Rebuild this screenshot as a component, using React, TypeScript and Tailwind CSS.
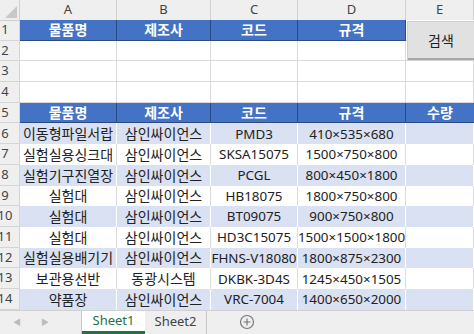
const cols = "grid grid-cols-[20px_97px_94px_87px_108px_68px]";
const font = { fontFamily: '"Noto Sans", "Noto Sans CJK KR", sans-serif' };

const rows = [
  ["이동형파일서랍", "삼인싸이언스", "PMD3", "410×535×680"],
  ["실험실용싱크대", "삼인싸이언스", "SKSA15075", "1500×750×800"],
  ["실험기구진열장", "삼인싸이언스", "PCGL", "800×450×1800"],
  ["실험대", "삼인싸이언스", "HB18075", "1800×750×800"],
  ["실험대", "삼인싸이언스", "BT09075", "900×750×800"],
  ["실험대", "삼인싸이언스", "HD3C15075", "1500×1500×1800"],
  ["실험실용배기기", "삼인싸이언스", "FHNS-V18080", "1800×875×2300"],
  ["보관용선반", "동광시스템", "DKBK-3D4S", "1245×450×1505"],
  ["약품장", "삼인싸이언스", "VRC-7004", "1400×650×2000"],
];

function RowNum({ n }: { n: number }) {
  return (
    <div className="h-full overflow-hidden border-r border-b border-[#d4d4d4] bg-[#efefef] flex items-center">
      <div className="ml-[-11px] w-[32px] shrink-0 text-center text-[13px] text-[#444]">{n}</div>
    </div>
  );
}

function Cell({ children, className = "" }: { children?: React.ReactNode; className?: string }) {
  return (
    <div className={`h-full overflow-hidden flex items-center justify-center whitespace-nowrap ${className}`}>
      {children}
    </div>
  );
}

function HeadRow({ n, withE }: { n: number; withE: boolean }) {
  const labels = ["물품명", "제조사", "코드", "규격"];
  return (
    <div className={`${cols} h-[20.7px]`}>
      <RowNum n={n} />
      {labels.map((l) => (
        <Cell key={l} className="bg-[#4472c4] border-r border-b border-[#2a4a86] text-white font-bold text-[14px]">
          {l}
        </Cell>
      ))}
      {withE ? (
        <Cell className="bg-[#4472c4] border-b border-[#2a4a86] text-white font-bold text-[14px]">수량</Cell>
      ) : (
        <Cell className="bg-white border-b border-[#d9d9d9]" />
      )}
    </div>
  );
}

function EmptyRow({ n }: { n: number }) {
  return (
    <div className={`${cols} h-[20.7px]`}>
      <RowNum n={n} />
      {[0, 1, 2, 3, 4].map((i) => (
        <Cell key={i} className="bg-white border-r border-b border-[#dadada]" />
      ))}
    </div>
  );
}

export default function App() {
  return (
    <div className="relative w-[474px] h-[334px] overflow-hidden bg-white text-[#222]" style={font}>
      <div className={`${cols} h-[20px]`}>
        <div className="relative border-r border-b border-[#d0d0d0] bg-[#efefef]">
          <svg className="absolute right-[2px] bottom-[2px]" width="12" height="12" viewBox="0 0 12 12">
            <polygon points="12,0 12,12 0,12" fill="#c8c8c8" />
          </svg>
        </div>
        {["A", "B", "C", "D", "E"].map((c) => (
          <div key={c} className="flex items-center justify-center border-r border-b border-[#d0d0d0] bg-[#efefef] text-[13px] text-[#444]">
            {c}
          </div>
        ))}
      </div>
      <HeadRow n={1} withE={false} />
      <EmptyRow n={2} />
      <EmptyRow n={3} />
      <EmptyRow n={4} />
      <HeadRow n={5} withE={true} />
      {rows.map((r, i) => {
        const blue = i % 2 === 0;
        const bg = blue ? "bg-[#d9e1f2] border-white" : "bg-white border-[#dcdcdc]";
        return (
          <div key={i} className={`${cols} h-[20.7px]`}>
            <RowNum n={i + 6} />
            {r.map((t, j) => (
              <Cell key={j} className={`${bg} border-r ${j < 2 ? "text-[14px]" : "text-[13.4px]"}`}>{t}</Cell>
            ))}
            <Cell className={`${bg} border-r`} />
          </div>
        );
      })}

      <button className="absolute left-[408px] top-[22px] w-[68px] h-[38px] bg-[#e1e1e1] border-r-2 border-b-2 border-[#a8a8a8] shadow-[0_0_0_1px_#d0d0d0] text-[14px] text-[#222]">
        검색
      </button>

      <div className="flex h-[24px] border-t border-[#d0d0d0] bg-[#efefef] text-[13px]">
        <div className="w-[82px] flex items-center border-r border-[#c8c8c8] text-[#bbb] text-[8px]">
          <span className="ml-[13px]">◀</span>
          <span className="ml-[20px]">▶</span>
        </div>
        <div className="w-[63px] flex items-center justify-center bg-white border-b-[3px] border-[#217346] text-[#217346]">
          Sheet1
        </div>
        <div className="w-[62px] flex items-center justify-center border-r border-[#c8c8c8] text-[#444]">
          Sheet2
        </div>
        <div className="w-[80px] flex items-center justify-center">
          <svg width="16" height="16" viewBox="0 0 16 16">
            <circle cx="8" cy="8" r="6.5" fill="none" stroke="#777" strokeWidth="1.2" />
            <path d="M8 4.5v7M4.5 8h7" stroke="#777" strokeWidth="1.2" />
          </svg>
        </div>
      </div>
    </div>
  );
}
